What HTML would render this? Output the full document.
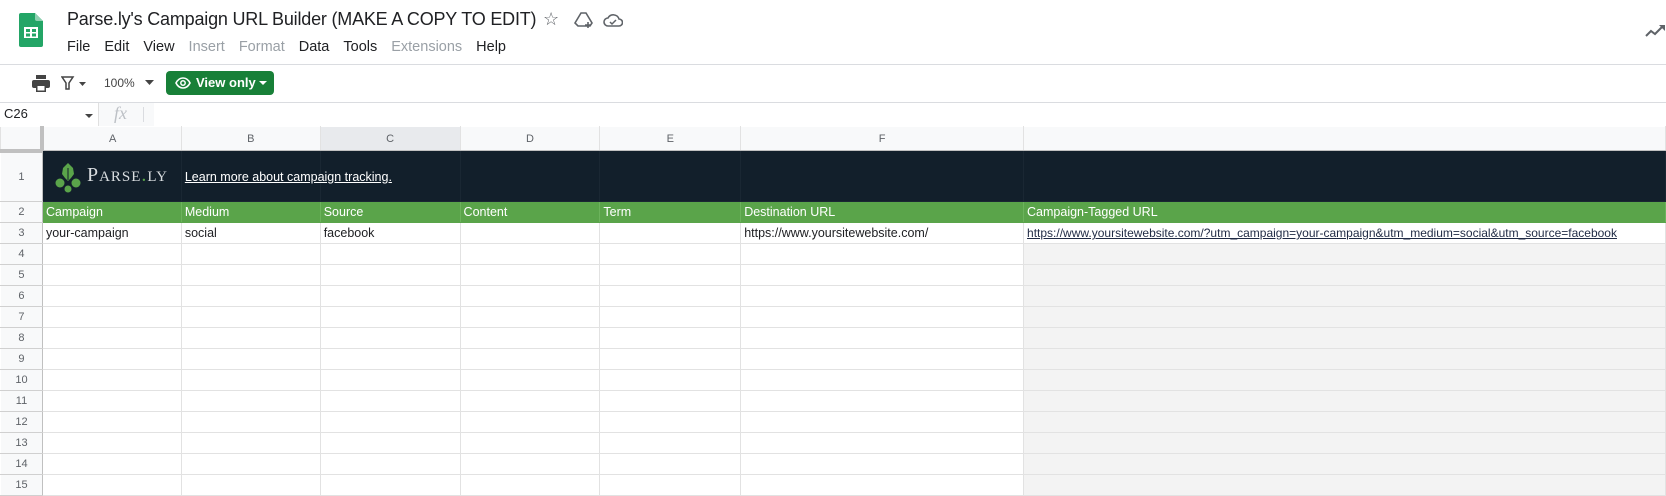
<!DOCTYPE html>
<html><head><meta charset="utf-8"><style>
*{margin:0;padding:0;box-sizing:border-box}
body{width:1666px;height:496px;overflow:hidden;background:#fff;font-family:"Liberation Sans",Arial,sans-serif;position:relative;color:#202124}
.abs{position:absolute}
.menu span{margin-right:14px;font-size:14.5px}
.grid{position:absolute;left:0;top:126px;width:1666px}
table{border-collapse:collapse;table-layout:fixed}
td{border:1px solid #e2e2e2;font-size:12.5px;padding:0 3px;white-space:nowrap;overflow:hidden;height:21px;line-height:20px}
td.rh{background:#f8f9fa;color:#5f6368;text-align:center;font-size:11px;border-color:#d0d0d0 #c0c0c0 #d0d0d0 #fff}
tr.ch td{background:#f8f9fa;color:#5f6368;text-align:center;font-size:11px;height:24px;border-bottom:1px solid #c0c0c0;border-top-color:#fff}
tr.r1 td.d{background:#121f2b;border-color:#1a2733}
tr.r2 td.d{background:#5aa44a;color:#fff;border-color:#5aa44a #6cb35c}
td.g{background:#f3f3f3}
</style></head><body>
<svg class="abs" style="left:19px;top:13px" width="24" height="34" viewBox="0 0 24 34"><path d="M2 0h14l8 8v24a2 2 0 0 1-2 2H2a2 2 0 0 1-2-2V2a2 2 0 0 1 2-2z" fill="#23a566"/><path d="M16 0l8 8h-6a2 2 0 0 1-2-2z" fill="#8ed1b1"/><rect x="5" y="14" width="14" height="11" fill="#fff"/><rect x="7" y="16" width="4" height="3" fill="#23a566"/><rect x="13" y="16" width="4" height="3" fill="#23a566"/><rect x="7" y="20.5" width="4" height="3" fill="#23a566"/><rect x="13" y="20.5" width="4" height="3" fill="#23a566"/></svg>
<div class="abs" style="left:67px;top:9px;font-size:18px;letter-spacing:-0.2px;color:#202124">Parse.ly's Campaign URL Builder (MAKE A COPY TO EDIT)</div>
<div class="abs" style="left:543px;top:9px;font-size:18px;color:#5f6368">☆</div>
<svg class="abs" style="left:574px;top:11px" width="20" height="18" viewBox="0 0 20 18"><path d="M7 2h5l6 10-2 3H4L1 12z" fill="none" stroke="#5f6368" stroke-width="1.6"/><path d="M14 11v6M11 14h6" stroke="#5f6368" stroke-width="1.6"/></svg>
<svg class="abs" style="left:603px;top:13px" width="20" height="14" viewBox="0 0 20 14"><path d="M5 13a4 4 0 0 1 0-8 6 6 0 0 1 11 1 3.5 3.5 0 0 1 0 7z" fill="none" stroke="#5f6368" stroke-width="1.6"/><path d="M7 9l2 2 4-4" fill="none" stroke="#5f6368" stroke-width="1.5"/></svg>
<div class="abs menu" style="left:67px;top:38px;color:#202124"><span>File</span><span>Edit</span><span>View</span><span style="color:#9aa0a6">Insert</span><span style="color:#9aa0a6">Format</span><span>Data</span><span>Tools</span><span style="color:#9aa0a6">Extensions</span><span>Help</span></div>
<svg class="abs" style="left:1645px;top:24px" width="21" height="14" viewBox="0 0 21 14"><path d="M1 12l5-5 4 3 8-8" fill="none" stroke="#5f6368" stroke-width="2"/><path d="M14 1h6v6z" fill="#5f6368"/></svg>
<div class="abs" style="left:0;top:64px;width:1666px;height:1px;background:#dadce0"></div>
<svg class="abs" style="left:32px;top:75px" width="18" height="17" viewBox="0 0 18 17"><rect x="4" y="0" width="10" height="4" fill="#444"/><rect x="0" y="5" width="18" height="8" rx="2" fill="#444"/><rect x="4" y="10" width="10" height="7" fill="#444"/><rect x="5.5" y="11" width="7" height="4.5" fill="#fff"/></svg>
<svg class="abs" style="left:61px;top:76px" width="28" height="14" viewBox="0 0 28 14"><path d="M1 1h11l-4 6v6h-3V7z" fill="none" stroke="#444" stroke-width="1.5"/><path d="M18 6h7l-3.5 4z" fill="#444"/></svg>
<div class="abs" style="left:104px;top:76px;font-size:12px;color:#444">100%</div>
<svg class="abs" style="left:145px;top:80px" width="9" height="5"><path d="M0 0h9L4.5 5z" fill="#444"/></svg>
<div class="abs" style="left:166px;top:71px;width:108px;height:24px;background:#188038;border-radius:4px;color:#fff;font-size:13px;line-height:24px;padding-left:30px;font-weight:bold">View only</div>
<svg class="abs" style="left:175px;top:77px" width="16" height="12" viewBox="0 0 16 12"><path d="M1 6C3 2 6 1 8 1s5 1 7 5c-2 4-5 5-7 5S3 10 1 6z" fill="none" stroke="#fff" stroke-width="1.6"/><circle cx="8" cy="6" r="2.2" fill="none" stroke="#fff" stroke-width="1.5"/></svg>
<svg class="abs" style="left:259px;top:81px" width="8" height="4"><path d="M0 0h8L4 4z" fill="#fff"/></svg>
<div class="abs" style="left:0;top:102px;width:1666px;height:1px;background:#dadce0"></div>
<div class="abs" style="left:4px;top:106px;font-size:13px">C26</div>
<svg class="abs" style="left:85px;top:114px" width="8" height="4"><path d="M0 0h8L4 4z" fill="#444"/></svg>
<div class="abs" style="left:98px;top:103px;width:56px;height:23px;background:#f8f9fa;border-left:1px solid #e0e0e0"></div>
<div class="abs" style="left:114px;top:103px;font-size:18px;font-style:italic;color:#bdc1c6;font-family:'Liberation Serif',serif">fx</div>
<div class="abs" style="left:143px;top:107px;width:1px;height:15px;background:#dadce0"></div>
<div class="grid"><table>
<colgroup><col style="width:42px"><col style="width:139px"><col style="width:139px"><col style="width:140px"><col style="width:140px"><col style="width:141px"><col style="width:283px"><col style="width:642px"></colgroup>
<tr class="ch"><td style="border-right:4px solid #c0c0c0;border-bottom:4px solid #c0c0c0"></td><td>A</td><td>B</td><td style="background:#e8eaed">C</td><td>D</td><td>E</td><td>F</td><td></td></tr>
<tr class="r1"><td class="rh" style="height:51px">1</td><td class="d" style="padding-left:12px;overflow:visible;position:relative">
<svg style="position:absolute;left:12px;top:12px" width="26" height="30" viewBox="0 0 26 30"><path d="M13 0l5 5 1 6-3 4-3 3-3-3-3-4 1-6z" fill="#5aa44a"/><circle cx="5" cy="20" r="4.5" fill="#5aa44a"/><circle cx="21" cy="20" r="4.5" fill="#5aa44a"/><circle cx="13" cy="26" r="3.5" fill="#5aa44a"/><path d="M13 5v12" stroke="#121f2b" stroke-width="1"/></svg>
<span style="position:absolute;left:44px;top:14px;font-family:'Liberation Serif',serif;color:#d9dde0;font-size:20px;letter-spacing:1px">P<span style="font-size:15px">ARSE</span><span style="color:#5aa44a">.</span><span style="font-size:15px">LY</span></span></td>
<td class="d" style="overflow:visible;position:relative"><span style="position:absolute;left:3px;top:16px;color:#fff;text-decoration:underline;font-size:12.5px;white-space:nowrap">Learn more about campaign tracking.</span></td><td class="d"></td><td class="d"></td><td class="d"></td><td class="d"></td><td class="d"></td></tr>
<tr class="r2"><td class="rh">2</td><td class="d">Campaign</td><td class="d">Medium</td><td class="d">Source</td><td class="d">Content</td><td class="d">Term</td><td class="d">Destination URL</td><td class="d">Campaign-Tagged URL</td></tr>
<tr><td class="rh">3</td><td>your-campaign</td><td>social</td><td>facebook</td><td></td><td></td><td>https://www.yoursitewebsite.com/</td><td style="text-decoration:underline;color:#1f2a44;font-size:12px">https://www.yoursitewebsite.com/?utm_campaign=your-campaign&amp;utm_medium=social&amp;utm_source=facebook</td></tr>
<tr><td class="rh">4</td><td></td><td></td><td></td><td></td><td></td><td></td><td class="g"></td></tr>
<tr><td class="rh">5</td><td></td><td></td><td></td><td></td><td></td><td></td><td class="g"></td></tr>
<tr><td class="rh">6</td><td></td><td></td><td></td><td></td><td></td><td></td><td class="g"></td></tr>
<tr><td class="rh">7</td><td></td><td></td><td></td><td></td><td></td><td></td><td class="g"></td></tr>
<tr><td class="rh">8</td><td></td><td></td><td></td><td></td><td></td><td></td><td class="g"></td></tr>
<tr><td class="rh">9</td><td></td><td></td><td></td><td></td><td></td><td></td><td class="g"></td></tr>
<tr><td class="rh">10</td><td></td><td></td><td></td><td></td><td></td><td></td><td class="g"></td></tr>
<tr><td class="rh">11</td><td></td><td></td><td></td><td></td><td></td><td></td><td class="g"></td></tr>
<tr><td class="rh">12</td><td></td><td></td><td></td><td></td><td></td><td></td><td class="g"></td></tr>
<tr><td class="rh">13</td><td></td><td></td><td></td><td></td><td></td><td></td><td class="g"></td></tr>
<tr><td class="rh">14</td><td></td><td></td><td></td><td></td><td></td><td></td><td class="g"></td></tr>
<tr><td class="rh">15</td><td></td><td></td><td></td><td></td><td></td><td></td><td class="g"></td></tr>
</table></div>
</body></html>
